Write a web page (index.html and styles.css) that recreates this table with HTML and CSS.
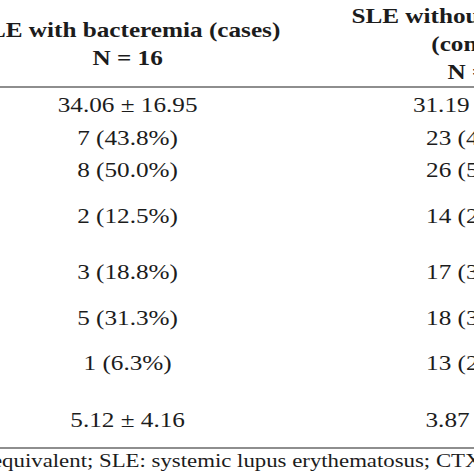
FILE: index.html
```html
<!DOCTYPE html>
<html lang="en">
<head>
    <meta charset="UTF-8">
    <meta name="viewport" content="width=device-width, initial-scale=1.0">
    <title>SLE bacteremia table</title>
    <link rel="stylesheet" href="styles.css">
</head>
<body>
    <div class="sheet">
        <div class="thead">
            <div class="cell">SLE with bacteremia (cases)<br>N = 16</div>
            <div class="cell">SLE without bacteremia<br>(controls)<br>N = 48</div>
        </div>
        <div class="tbody">
            <div class="row"><div class="cell">34.06 ± 16.95</div><div class="cell">31.19 ± 12.47</div></div>
            <div class="row"><div class="cell">7 (43.8%)</div><div class="cell">23 (47.9%)</div></div>
            <div class="row double"><div class="cell">8 (50.0%)</div><div class="cell">26 (54.2%)</div></div>
            <div class="row triple"><div class="cell">2 (12.5%)</div><div class="cell">14 (29.2%)</div></div>
            <div class="row double"><div class="cell">3 (18.8%)</div><div class="cell">17 (35.4%)</div></div>
            <div class="row double"><div class="cell">5 (31.3%)</div><div class="cell">18 (37.5%)</div></div>
            <div class="row triple"><div class="cell">1 (6.3%)</div><div class="cell">13 (27.1%)</div></div>
            <div class="row"><div class="cell">5.12 ± 4.16</div><div class="cell">3.87 ± 3.02</div></div>
        </div>
        <p class="note">equivalent; SLE: systemic lupus erythematosus; CTX: cyclophosphamide</p>
    </div>
</body>
</html>
```

FILE: styles.css
```css
* { margin: 0; padding: 0; box-sizing: border-box; }
html, body { width: 474px; height: 474px; overflow: hidden; background: #fff; }
body {
    font-family: "Liberation Serif", "Times New Roman", serif;
    color: #1c1c1c;
}
/* the source figure is stretched sideways, so the whole sheet is too */
.sheet {
    width: 600px;
    margin-left: -49.6px;
    transform: scaleX(1.2);
    transform-origin: 0 0;
    font-size: 21px;
}
.thead, .row { display: grid; grid-template-columns: 296px 296px; }
.cell { text-align: center; }
.thead {
    align-items: center;
    font-weight: bold;
    line-height: 28px;
    padding-top: 2px;
    border-bottom: 2px solid #8e8e8e;
}
.tbody {
    padding: 5px 0 7px;
    border-bottom: 2px solid #8e8e8e;
    line-height: 24px;
}
.row { height: 32.5px; }
.row.double { height: 45.5px; }
.row.triple { height: 56.5px; }
.note {
    font-size: 19px;
    line-height: 24px;
    padding-left: 35px;
    white-space: nowrap;
}
```
